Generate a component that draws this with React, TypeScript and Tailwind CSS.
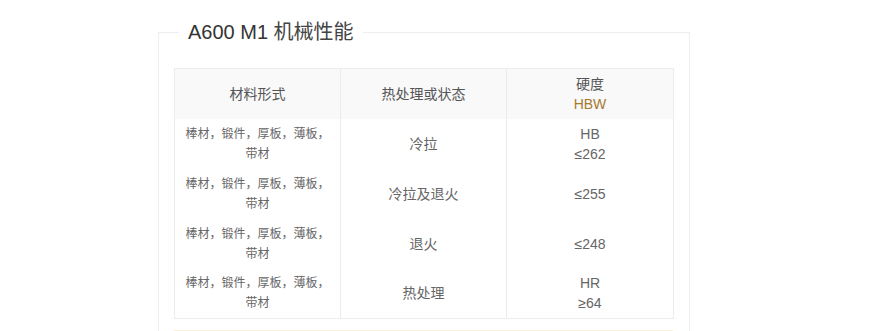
import React from "react";

const rows = [
  { form: ["棒材，锻件，厚板，薄板，", "带材"], state: "冷拉", hard: ["HB", "≤262"] },
  { form: ["棒材，锻件，厚板，薄板，", "带材"], state: "冷拉及退火", hard: ["≤255"] },
  { form: ["棒材，锻件，厚板，薄板，", "带材"], state: "退火", hard: ["≤248"] },
  { form: ["棒材，锻件，厚板，薄板，", "带材"], state: "热处理", hard: ["HR", "≥64"] },
];

export default function App() {
  return (
    <div
      className="w-[887px] h-[331px] overflow-hidden bg-white"
      style={{ fontFamily: '"Liberation Sans", "Noto Sans CJK SC", sans-serif' }}
    >
      <fieldset className="ml-[158px] mt-[18px] w-[531px] border border-[#eeeeee] px-[15px] pb-4">
        <legend className="ml-[5px] px-[9px] text-[20px] leading-[28px] text-[#333]">
          A600 M1 <span className="text-[#444]">机械性能</span>
        </legend>
        <table className="mt-[22px] w-[499px] table-fixed border-collapse text-center text-[#666]">
          <colgroup>
            <col className="w-[166px]" />
            <col className="w-[166px]" />
            <col className="w-[167px]" />
          </colgroup>
          <thead>
            <tr className="h-[50px] bg-[#f9f9f9] text-[14px] leading-[20px] text-[#555]">
              <th className="border-x border-t border-[#ececec] font-normal">材料形式</th>
              <th className="border-x border-t border-[#ececec] font-normal">热处理或状态</th>
              <th className="border-x border-t border-[#ececec] font-normal">
                <div>硬度</div>
                <div className="text-[#a57a2c]">HBW</div>
              </th>
            </tr>
          </thead>
          <tbody>
            {rows.map((r, i) => (
              <tr key={i} className="h-[50px]">
                <td className="border-x border-[#ececec] text-[12px] leading-[20px]">
                  {r.form.map((l, j) => (
                    <div key={j}>{l}</div>
                  ))}
                </td>
                <td className="border-x border-[#ececec] text-[14px] leading-[20px]">{r.state}</td>
                <td className="border-x border-[#ececec] text-[14px] leading-[20px]">
                  {r.hard.map((l, j) => (
                    <div key={j}>{l}</div>
                  ))}
                </td>
              </tr>
            ))}
            <tr className="h-0">
              <td colSpan={3} className="border-t border-[#ececec] p-0" />
            </tr>
          </tbody>
        </table>
        <div className="mt-[11px] h-[20px] w-[499px] border-t border-[#fcefdc] bg-[#fffdfa]" />
      </fieldset>
    </div>
  );
}
